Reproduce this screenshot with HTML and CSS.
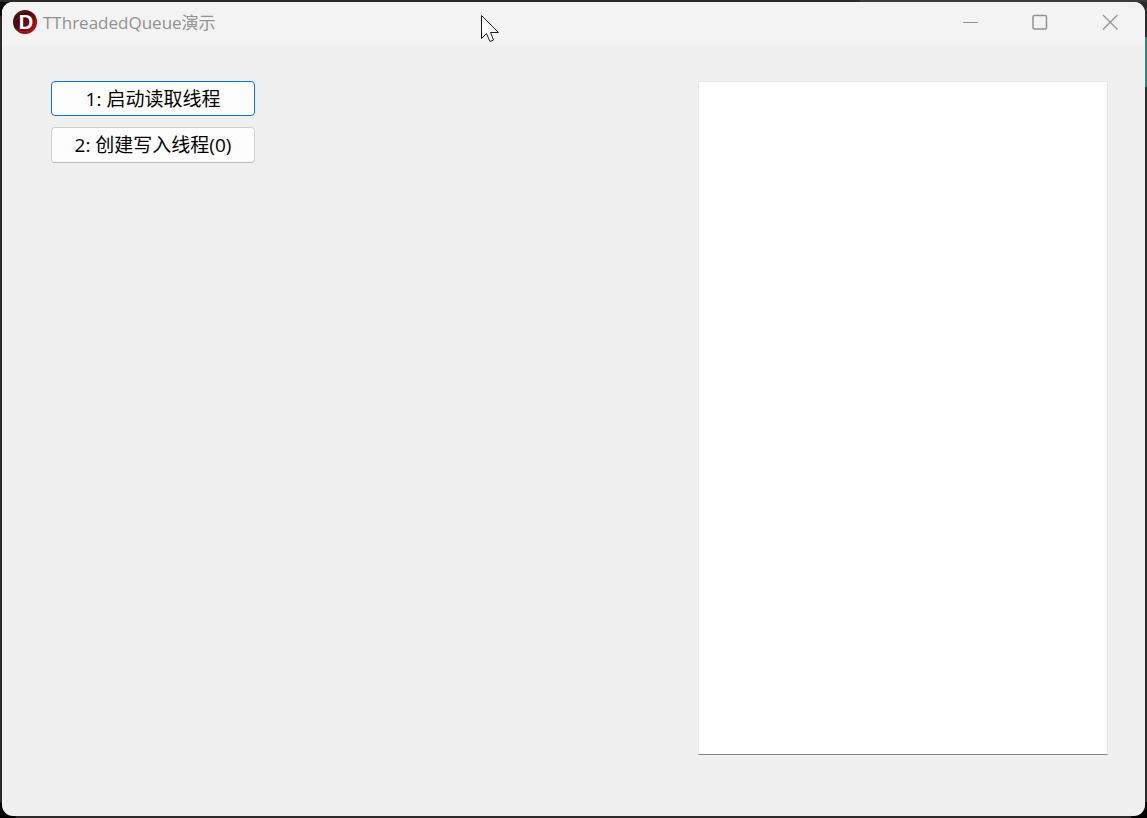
FILE: index.html
```html
<!DOCTYPE html>
<html lang="zh-CN">
<head>
<meta charset="utf-8">
<title>TThreadedQueue演示</title>
<link rel="stylesheet" href="styles.css">
</head>
<body>
<div class="desktop">
  <div class="window">
    <header class="titlebar">
      <svg class="logo" viewBox="0 0 24 24" aria-hidden="true">
        <defs>
          <linearGradient id="red" x1="0" y1="0" x2="1" y2="1">
            <stop offset="0" stop-color="#6e1219"/>
            <stop offset=".4" stop-color="#4a0a10"/>
            <stop offset="1" stop-color="#c01018"/>
          </linearGradient>
        </defs>
        <circle cx="12" cy="12" r="12" fill="url(#red)"/>
        <path d="M1 9Q6 4 12 4M1 15Q4 10 9 8M3 19Q5 15 9 13" fill="none" stroke="#2c060a" stroke-width="1"/>
        <path d="M3 19Q12 25 20 19Q23 16 23 9" fill="none" stroke="#b21219" stroke-width="1.5"/>
        <text class="logo-letter" x="13" y="19" text-anchor="middle">D</text>
      </svg>
      <h1 class="title">TThreadedQueue演示</h1>
      <div class="controls">
        <button class="control" type="button" aria-label="最小化"><svg viewBox="0 0 16 16"><path d="M1 8.5H16"/></svg></button>
        <button class="control" type="button" aria-label="最大化"><svg viewBox="0 0 16 16"><rect class="box" x="1" y="1.500" width="13.500" height="13.500" rx="1.500"/></svg></button>
        <button class="control" type="button" aria-label="关闭"><svg viewBox="0 0 16 16"><path class="cross" d="M1 1L15.500 15.500M15.500 1L1 15.500"/></svg></button>
      </div>
    </header>
    <main class="form">
      <div class="actions">
        <button class="action action-default" type="button">1: 启动读取线程</button>
        <button class="action action-tall" type="button">2: 创建写入线程(0)</button>
      </div>
      <textarea class="memo" aria-label="日志"></textarea>
    </main>
  </div>
  <svg class="pointer" viewBox="0 0 20 30" aria-hidden="true">
    <path d="M1.500 1.500V24.500L6.500 19.500L10 27.500L13.500 26L10.500 18.500H18.500Z" fill="#fff" stroke="#1b1b26" stroke-width="1"/>
  </svg>
</div>
</body>
</html>
```
FILE: styles.css
```css
* {
  box-sizing: border-box;
}

body {
  margin: 0;
  font-family: "Open Sans", "Noto Sans CJK SC", sans-serif;
}

.desktop {
  position: relative;
  display: flex;
  min-height: 100vh;
  padding: 2px;
  background:
    linear-gradient(#2f8580, #2f8580) right 37px / 2px 50px no-repeat,
    linear-gradient(90deg, #2b2929 75%, #3a3840 75%) top / 100% 2px no-repeat,
    linear-gradient(45deg, #000 12px, transparent 12px),
    linear-gradient(135deg, #000 12px, transparent 12px),
    linear-gradient(315deg, #000 12px, transparent 12px),
    #2b2929;
}

.window {
  flex: 1;
  display: flex;
  flex-direction: column;
  overflow: hidden;
  border-radius: 11px;
  background: #f0f0f0;
}

.titlebar {
  display: flex;
  align-items: center;
  height: 43px;
  padding-left: 11px;
  background: #f3f3f3;
}

.logo {
  width: 24px;
  height: 24px;
  margin-bottom: 3px;
}

.logo-letter {
  font: bold 20px "Liberation Sans", sans-serif;
  fill: #fff;
}

.title {
  flex: 1;
  margin: 0 0 2px 6px;
  font-size: 17px;
  font-weight: 400;
  line-height: 24px;
  color: #919191;
}

.controls {
  display: flex;
  align-self: stretch;
}

.control {
  width: 70px;
  padding: 0 0 3px;
  border: 0;
  background: none;
}

.control svg {
  display: block;
  width: 16px;
  height: 16px;
  margin: 0 auto;
  fill: none;
  stroke: #929292;
  stroke-width: 1px;
}

.control .box {
  stroke-width: 1.5px;
}

.control .cross {
  stroke-width: 1.3px;
}

.form {
  flex: 1;
  display: flex;
  justify-content: space-between;
  padding: 36px 37px 61px 49px;
}

.actions {
  display: flex;
  flex-direction: column;
  gap: 11px;
}

.action {
  width: 204px;
  height: 35px;
  padding: 0;
  border: 1px solid #d0d0d0;
  border-bottom-color: #bcbcbc;
  border-radius: 4px;
  background: #fdfdfd;
  color: #000;
  font-family: inherit;
  font-size: 19px;
  line-height: 24px;
}

.action-tall {
  height: 36px;
}

.action-default {
  border-color: #0078d4;
}

.memo {
  width: 410px;
  padding: 4px;
  border: 1px solid #e8e8e8;
  border-bottom-color: #868686;
  background: #fff;
  font: inherit;
  resize: none;
}

.pointer {
  position: absolute;
  top: 14px;
  left: 480px;
  width: 20px;
  height: 30px;
}
```
